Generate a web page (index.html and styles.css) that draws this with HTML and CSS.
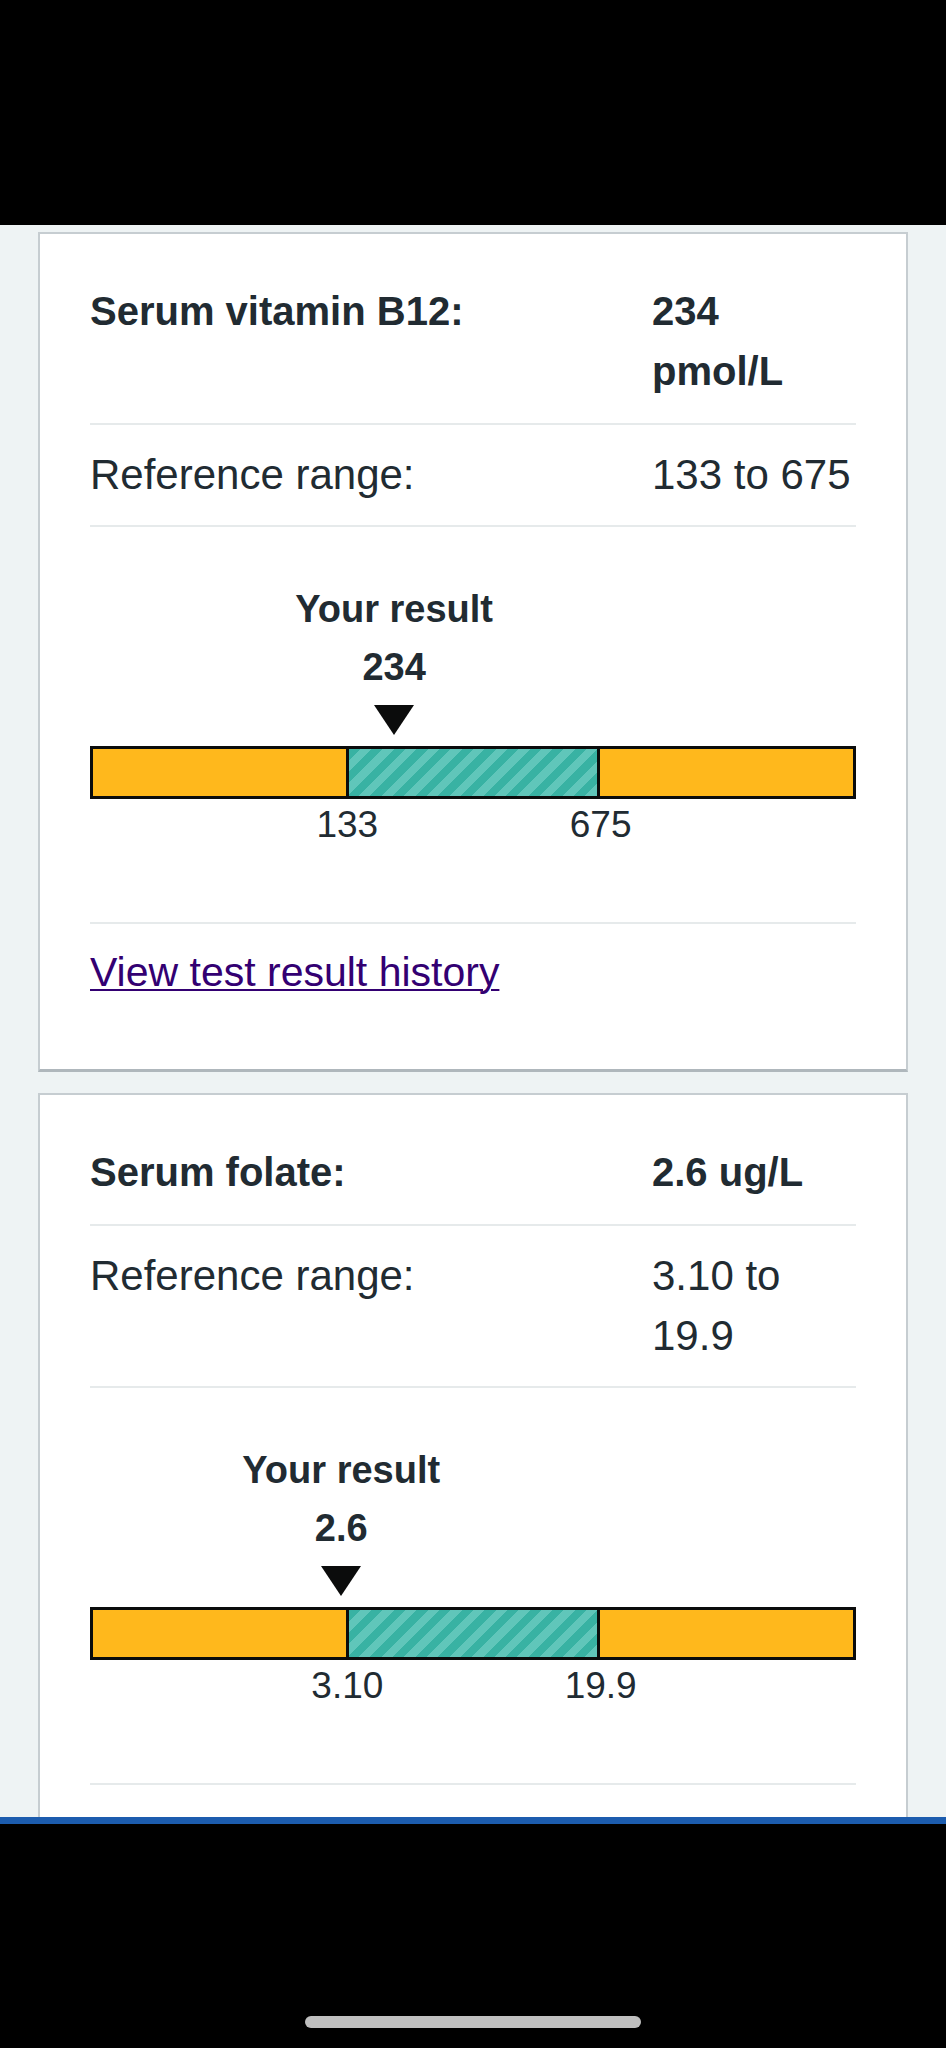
FILE: index.html
```html
<!DOCTYPE html>
<html lang="en">
<head>
<meta charset="utf-8">
<title>Test results</title>
<link rel="stylesheet" href="styles.css">
</head>
<body>
<div class="screen">
  <div class="status-bar"></div>

  <main class="viewport">
    <section class="card">
      <dl class="result-list">
        <div class="row">
          <dt class="key key-strong">Serum vitamin B12:</dt>
          <dd class="value value-strong">234 pmol/L</dd>
        </div>
        <div class="row">
          <dt class="key">Reference range:</dt>
          <dd class="value">133 to 675</dd>
        </div>
      </dl>

      <div class="chart">
        <div class="marker-track">
          <div class="marker" style="--pos: 39.7%">
            <span class="marker-title">Your result</span>
            <span class="marker-value">234</span>
            <svg class="marker-arrow" width="40" height="30" viewBox="0 0 40 30" aria-hidden="true">
              <polygon points="0,0 40,0 20,30"/>
            </svg>
          </div>
        </div>
        <div class="range-bar">
          <span class="band band-outside"></span>
          <span class="band band-normal"></span>
          <span class="band band-outside"></span>
        </div>
        <div class="axis">
          <span></span>
          <span class="tick">133</span>
          <span class="tick">675</span>
        </div>
      </div>

      <div class="card-link">
        <a href="#">View test result history</a>
      </div>
    </section>

    <section class="card">
      <dl class="result-list">
        <div class="row">
          <dt class="key key-strong">Serum folate:</dt>
          <dd class="value value-strong">2.6 ug/L</dd>
        </div>
        <div class="row">
          <dt class="key">Reference range:</dt>
          <dd class="value">3.10 to 19.9</dd>
        </div>
      </dl>

      <div class="chart">
        <div class="marker-track">
          <div class="marker" style="--pos: 32.8%">
            <span class="marker-title">Your result</span>
            <span class="marker-value">2.6</span>
            <svg class="marker-arrow" width="40" height="30" viewBox="0 0 40 30" aria-hidden="true">
              <polygon points="0,0 40,0 20,30"/>
            </svg>
          </div>
        </div>
        <div class="range-bar">
          <span class="band band-outside"></span>
          <span class="band band-normal"></span>
          <span class="band band-outside"></span>
        </div>
        <div class="axis">
          <span></span>
          <span class="tick">3.10</span>
          <span class="tick">19.9</span>
        </div>
      </div>
    </section>
  </main>

  <div class="browser-bar">
    <span class="home-indicator"></span>
  </div>
</div>
</body>
</html>
```

FILE: styles.css
```css
* {
  box-sizing: border-box;
}

html,
body {
  margin: 0;
  padding: 0;
  background: #000;
}

body {
  font-family: "Liberation Sans", Arial, sans-serif;
  color: #212b32;
}

.screen {
  width: 946px;
  height: 2048px;
  display: flex;
  flex-direction: column;
  overflow: hidden;
}

/* Phone status area */
.status-bar {
  flex: none;
  height: 225px;
  background: #000;
}

/* Scrolled page area */
.viewport {
  flex: none;
  height: 1592px;
  overflow: hidden;
  background: #eef3f4;
  padding: 7px 38px 0;
  display: flex;
  flex-direction: column;
  gap: 21px;
}

.card {
  flex: none;
  background: #fff;
  border: 2px solid #c6cdd1;
  border-bottom: 3px solid #afb7bc;
  padding: 29px 50px 45px;
}

/* Key / value rows */
.result-list {
  margin: 0;
}

.row {
  display: grid;
  grid-template-columns: 1fr 204px;
  padding: 18px 0 22px;
  border-bottom: 2px solid #e6eaeb;
}

.key,
.value {
  margin: 0;
  font-size: 42px;
  line-height: 60px;
  padding-top: 2px;
  margin-bottom: -2px;
}

.key-strong,
.value-strong {
  font-weight: 700;
  font-size: 40px;
  padding-top: 0;
  margin-bottom: 0;
}

/* Result chart */
.chart {
  padding: 53px 0 75px;
  border-bottom: 2px solid #e6eaeb;
}

.marker-track {
  display: flex;
}

.marker {
  width: 0;
  margin-left: var(--pos);
  display: flex;
  flex-direction: column;
  align-items: center;
  white-space: nowrap;
}

.marker-title,
.marker-value {
  font-weight: 700;
  font-size: 38px;
  line-height: 58px;
}

.marker-arrow {
  display: block;
  margin-top: 9px;
  fill: #0b0c0c;
}

.range-bar {
  margin-top: 11px;
  height: 53px;
  border: 3px solid #0b0c0c;
  display: grid;
  grid-template-columns: repeat(3, 1fr);
}

.band-outside {
  background: #ffb81c;
}

.band-normal {
  border-left: 3px solid #0b0c0c;
  border-right: 3px solid #0b0c0c;
  background: repeating-linear-gradient(
    135deg,
    #38b2a3 0 8px,
    #60c6ba 8px 16px
  );
}

.axis {
  display: grid;
  grid-template-columns: repeat(3, 1fr);
  padding: 4px 3px 0;
}

.tick {
  justify-self: start;
  transform: translateX(calc(-50% + 1px));
  font-size: 37px;
  line-height: 44px;
}

/* Footer link */
.card-link {
  padding: 18px 0 22px;
  font-size: 41px;
  line-height: 60px;
}

.card-link a {
  color: #330072;
  text-decoration: underline;
  text-decoration-thickness: 2px;
  text-underline-offset: 3px;
}

/* Browser toolbar edge and home indicator */
.browser-bar {
  flex: 1;
  background: #000;
  border-top: 7px solid #1c5cae;
  display: flex;
  flex-direction: column;
  justify-content: flex-end;
  align-items: center;
  padding-bottom: 20px;
}

.home-indicator {
  width: 336px;
  height: 12px;
  border-radius: 6px;
  background: #bfbfbf;
}
```
